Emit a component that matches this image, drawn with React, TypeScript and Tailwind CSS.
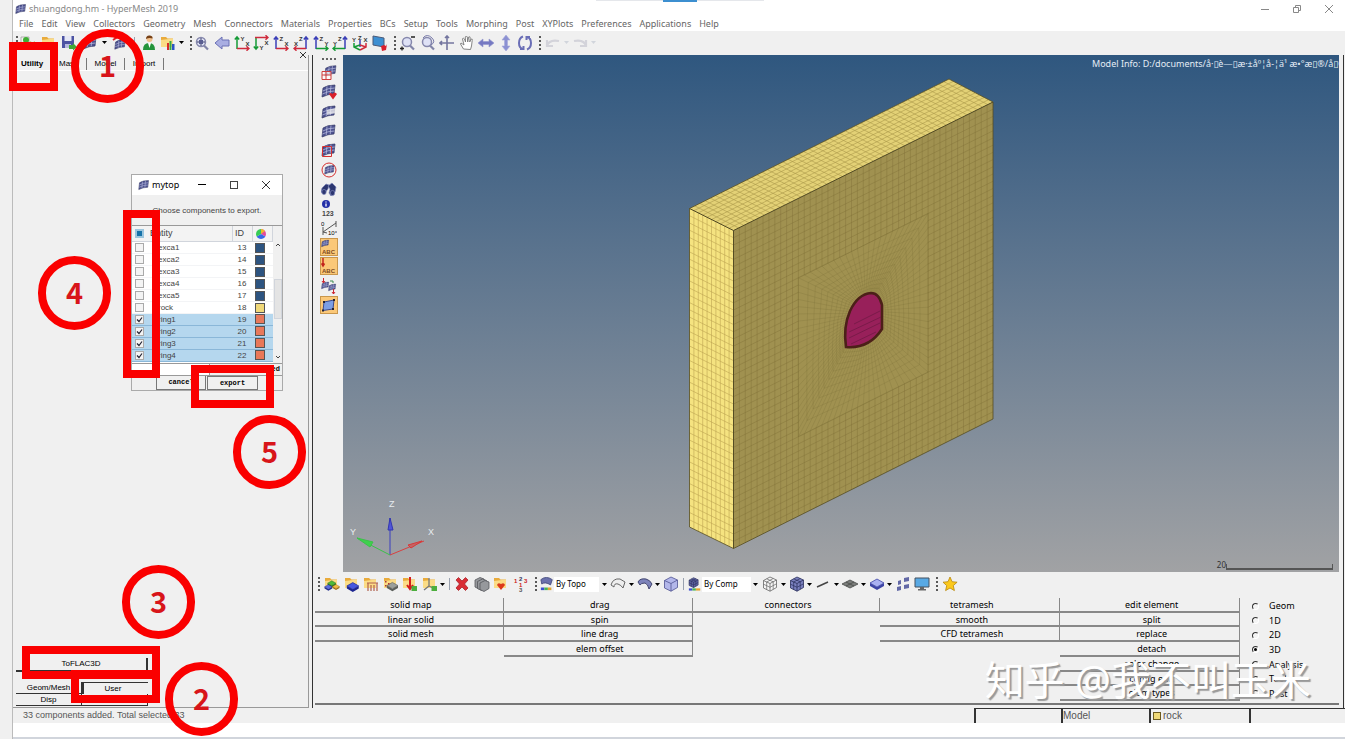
import React, { useState } from 'react';
import clsx from 'clsx';

const MENUS = ['File', 'Edit', 'View', 'Collectors', 'Geometry', 'Mesh', 'Connectors', 'Materials', 'Properties', 'BCs', 'Setup', 'Tools', 'Morphing', 'Post', 'XYPlots', 'Preferences', 'Applications', 'Help'];

const COLUMNS = [
  { width: 'flex-[189]', items: ['solid map', 'linear solid', 'solid mesh'] },
  { width: 'flex-[189]', items: ['drag', 'spin', 'line drag', 'elem offset'] },
  { width: 'flex-[188]', items: ['connectors'] },
  { width: 'flex-[180]', items: ['tetramesh', 'smooth', 'CFD tetramesh'] },
  { width: 'flex-[180]', items: ['edit element', 'split', 'replace', 'detach', 'color change', 'config edit', 'elem types'] },
];

const PAGES = ['Geom', '1D', '2D', '3D', 'Analysis', 'Tool', 'Post'];

const ENTITIES = [
  { name: 'exca1', id: 13, color: 'bg-[#2d5480]' },
  { name: 'exca2', id: 14, color: 'bg-[#2d5480]' },
  { name: 'exca3', id: 15, color: 'bg-[#2d5480]' },
  { name: 'exca4', id: 16, color: 'bg-[#2d5480]' },
  { name: 'exca5', id: 17, color: 'bg-[#2d5480]' },
  { name: 'rock', id: 18, color: 'bg-[#f0d878]' },
  { name: 'ring1', id: 19, color: 'bg-[#e8785a]' },
  { name: 'ring2', id: 20, color: 'bg-[#e8785a]' },
  { name: 'ring3', id: 21, color: 'bg-[#e8785a]' },
  { name: 'ring4', id: 22, color: 'bg-[#e8785a]' },
];

/* ---------- icons ---------- */

const Patch = ({ x = 0, y = 0, s = 1 }: { x?: number; y?: number; s?: number }) => (
  <g transform={`translate(${x} ${y}) scale(${s})`}>
    <path d="M2 5Q6 2 14 2L13 11Q7 11 1 14Z" fill="#4d5290" stroke="#343864" strokeWidth=".7" />
    <path d="M6 3.4L5.2 12.3M10 2.4L9.2 11.4M1.8 8Q7 5 13.7 5M1.4 11Q7 8 13.4 8" stroke="#b4b7dc" strokeWidth=".8" fill="none" />
  </g>
);

const Folder = () => (
  <>
    <path d="M1 2h5l1.5 1.5H13V12H1z" fill="#e9ab3c" />
    <path d="M1 5L13 3.5V12H1z" fill="#fbdc86" />
  </>
);

const Slab = ({ top, side, x = 0, y = 0, s = 1 }: { top: string; side: string; x?: number; y?: number; s?: number }) => (
  <g transform={`translate(${x} ${y}) scale(${s})`}>
    <path d="M1 7v3l7 4 7-4V7l-7 4z" fill={side} />
    <path d="M1 7l7-4 7 4-7 4z" fill={top} stroke={side} strokeWidth=".8" />
  </g>
);

const Cube = ({ fill, line, grid }: { fill: string; line: string; grid?: boolean }) => (
  <g stroke={line} strokeWidth=".8" fill="none" strokeLinejoin="round">
    <path d="M1.5 4.5L8 1l6.5 3v7.5L8 15.2 1.5 12z" fill={fill} />
    <path d="M1.5 4.5L8 7.5l6.5-3.5M8 7.5v7.7" />
    {grid && <path d="M4.7 2.8L11.2 5.8V13.3M11.2 2.5L4.7 6V13.6M1.5 8.2L8 11.3l6.5-3.5" strokeWidth=".7" />}
  </g>
);

const Lens = () => (
  <>
    <path d="M9.5 10l4.5 4.5" stroke="#8285a8" strokeWidth="2.2" />
    <circle cx="7" cy="7" r="4.5" fill="#dfe2f6" stroke="#8688ac" strokeWidth="1.5" />
  </>
);

const R = '#cf2a3c';
const G = '#159a36';
const B = '#3b3fb8';

// two-axis view icon, the corner says where the axes meet
const Axes = ({ corner, v, h, vc, hc }: { corner: 'bl' | 'tl' | 'br'; v: string; h: string; vc: string; hc: string }) => (
  <g fill="none" strokeWidth="1.5">
    {corner === 'bl' && (
      <>
        <path d="M3 14V2M.8 4.5L3 2l2.2 2.5" stroke={vc} />
        <path d="M3 13.5h12M12.5 11.3l2.5 2.2-2.5 2.2" stroke={hc} />
      </>
    )}
    {corner === 'tl' && (
      <>
        <path d="M3 2v12M.8 11.5L3 14l2.2-2.5" stroke={vc} />
        <path d="M2 2.5h13M12.5 .3L15 2.5l-2.5 2.2" stroke={hc} />
      </>
    )}
    {corner === 'br' && (
      <>
        <path d="M13 14V2M10.8 4.5L13 2l2.2 2.5" stroke={vc} />
        <path d="M13 13.5H1M3.5 11.3L1 13.5l2.5 2.2" stroke={hc} />
      </>
    )}
    <g fill="#333" fontSize="6" fontWeight="bold" fontFamily="Liberation Sans">
      <text x={corner === 'br' ? 6 : 6.5} y={corner === 'tl' ? 14.5 : 5.5}>{v}</text>
      <text x={corner === 'br' ? 1 : 11.5} y={corner === 'tl' ? 9.5 : 10.5}>{h}</text>
    </g>
  </g>
);

const Spot = () => <path d="M9 11l3-1 2 1 1-2-1 6-4 1z" fill="#d9202c" />;

const ART: Record<string, React.ReactNode> = {
  patch: <Patch />,
  newModel: <><path d="M1 2h8v11H1z" fill="#f3f3ee" stroke="#999" strokeWidth=".7" /><circle cx="6" cy="5" r="3" fill="#3fae34" /><path d="M10 7l5 5M10 12l5-5" stroke="#9ac43d" strokeWidth="2" /></>,
  open: <Folder />,
  save: <><path d="M1 1h12v12H1z" fill="#4c53a2" /><path d="M3.5 1h7v5h-7z" fill="#e6e8f5" /><path d="M4 9h6v4H4z" fill="#b6bade" /><path d="M8 10h4V8l4 4-4 3.5V14H8z" fill="#43a838" /></>,
  importModel: <><Patch x={2} y={3} s={0.8} /><path d="M1 5l6-4 2 3" stroke="#d8232c" strokeWidth="2" fill="none" /></>,
  user: <><circle cx="8.5" cy="4" r="3" fill="#f1c08c" /><path d="M5 4q0-4 4-3.5 3 .5 2.5 3Q8 2.5 5 4z" fill="#764016" /><path d="M2 15q0-7 6-7 6 0 6 7z" fill="#23943b" /><path d="M7 8l1.5 5L10 8z" fill="#fff" /></>,
  chartFolder: <><Folder /><path d="M7 8h2v7H7z" fill="#d92b2b" /><path d="M9.5 6h2v9h-2z" fill="#37a844" /><path d="M12 9h2.5v6H12z" fill="#2d53c4" /></>,
  fit: <><Lens /><path d="M7 3v8M3 7h8" stroke="#43466f" /><path d="M5 5h4v4H5z" fill="#5a5e91" /></>,
  back: <path d="M1 8l7-6v3h7v6H8v3z" fill="#a9aee2" stroke="#6b70b5" />,
  xy: <Axes corner="bl" v="Y" h="X" vc={G} hc={R} />,
  xyDown: <Axes corner="tl" v="Y" h="X" vc={G} hc={R} />,
  zx: <Axes corner="bl" v="Z" h="X" vc={B} hc={R} />,
  zxLeft: <Axes corner="br" v="Z" h="X" vc={B} hc={R} />,
  zy: <Axes corner="bl" v="Z" h="Y" vc={B} hc={G} />,
  zyLeft: <Axes corner="br" v="Z" h="Y" vc={B} hc={G} />,
  iso: <g fill="none" strokeWidth="1.5"><path d="M8 12V5" stroke={B} /><path d="M8 15L2 12V8M2 12l6-2" stroke={G} /><path d="M8 15l6-3V8M14 12l-6-2" stroke={R} /><g fontSize="6" fontWeight="bold" fontFamily="Liberation Sans" fill="#333"><text x="0" y="7">Y</text><text x="6" y="5">Z</text><text x="11.5" y="7">X</text></g></g>,
  screen: <><path d="M1 1l11 2v9L1 10z" fill="#3d8fd2" stroke="#4b5a78" /><Spot /></>,
  zoomPlus: <><Lens /><path d="M11 2h4M0 13.5h4M2 11.5v4" stroke="#222" strokeWidth="1.3" /></>,
  zoomArea: <><Lens /><path d="M3 3q4-5 9 0 4 4-1 7" stroke="#7779a8" fill="none" /></>,
  move: <path d="M8 1v14M1 8h14M6 3l2-2 2 2M3 6L1 8l2 2" stroke="#74769f" strokeWidth="1.6" fill="none" />,
  hand: <path d="M4.5 14L1.5 9q0-2 2 0L5 10 3.5 4q.5-2 2 0l1 3-.2-5q1-2 2 0l.4 5 1-5q1.5-1 1.5 1l-.5 4 1.5-3q1.5-.5 1 1.5L12.5 11l-1 3.5z" fill="#fff" stroke="#777" strokeWidth=".9" />,
  leftRight: <path d="M0 8l5-4v2.5h6V4l5 4-5 4V9.5H5V12z" fill="#7579c2" stroke="#9295ce" strokeWidth=".6" />,
  upDown: <path d="M8 0l4 5H9.5v6H12l-4 5-4-5h2.5V5H4z" fill="#8b90d2" stroke="#a5a8da" strokeWidth=".6" />,
  rotate: <path d="M6 1.5Q2 3 2 8t4 6M3 14h3.5v-3M10 14.5q4-1.5 4-6.5t-4-6M13 2H9.5v3" stroke="#6a6eb6" strokeWidth="2" fill="none" />,
  undo: <path d="M2 11q2-7 12-5M2 5v6h6" stroke="#d3d3da" strokeWidth="2.2" fill="none" />,
  redo: <path d="M14 11Q12 4 2 6M14 5v6H8" stroke="#d3d3da" strokeWidth="2.2" fill="none" />,
  maskBox: <><Patch x={3} y={-1} s={0.85} /><path d="M1 6.5h9v8H1zM1 10h9M5 6.5v8" fill="#fff" fillOpacity=".7" stroke="#cf3c3c" /></>,
  patchHeart: <><Patch y={-1} /><path d="M8 10q2-2 3.5 0 2-3 4.5 0l-4 5.5z" fill="#d9202c" /></>,
  patchPart: <><Patch /><path d="M6 6l9-2v5l-9 2z" fill="#f0f0f0" fillOpacity=".75" /></>,
  patchFrame: <><Patch /><path d="M1.5 4.5h9v10h-9z" fill="none" stroke="#d63030" /></>,
  patchRound: <><Patch x={3} y={2} s={0.72} /><circle cx="8" cy="8" r="7" fill="none" stroke="#d63030" /></>,
  find: <g fill="#2c3670" stroke="#8088bb" strokeWidth=".7"><path d="M1 7l4-4 3 1-1 4-4 5-3-2z" /><path d="M7 5l4-3 4 4-1 5-4 4-2-3 1-4z" /><ellipse cx="3" cy="11" rx="2.2" ry="2.6" /><ellipse cx="11.5" cy="12" rx="2.2" ry="2.6" /></g>,
  numbers: <><circle cx="5" cy="4" r="4" fill="#2430a8" /><path d="M5 1.5v1M5 3.5v3" stroke="#fff" strokeWidth="1.3" /><text x="1" y="15.5" fontSize="7" fontWeight="bold" fontFamily="Liberation Sans" fill="#444">123</text></>,
  measure: <><path d="M2 7v8M2 12L15 3M15 1v6M2 12l4 1" stroke="#555" fill="none" /><text x="0" y="6" fontSize="6" fontFamily="Liberation Sans">0</text><text x="7" y="15" fontSize="6" fontFamily="Liberation Sans">10°</text></>,
  patchAbc: <><Patch x={0} y={0} s={0.55} /><text x="1" y="15" fontSize="6" fontWeight="bold" fontFamily="Liberation Sans" fill="#7b4a20">ABC</text></>,
  loadAbc: <><path d="M2 0v8M.5 5.5L2 8l1.5-2.5" stroke="#c3241c" strokeWidth="1.5" fill="none" /><text x="1" y="15" fontSize="6" fontWeight="bold" fontFamily="Liberation Sans" fill="#7b4a20">ABC</text></>,
  loads: <><Patch x={0} y={3} s={0.55} /><Patch x={7} y={5} s={0.55} /><path d="M2.5 0v5M12.5 11v5M1 3l1.5 2L4 3M11 14l1.5 2 1.5-2" stroke="#cc2630" fill="none" /><path d="M9 3h3v2" stroke="#3b8a50" fill="none" /></>,
  sheet: <><path d="M3 5l10-2-1 9-10 1.5z" fill="#7c9ee4" stroke="#3b4a8f" /><path d="M2 4h2v2H2zM12 2h2v2h-2zM11 11h2v2h-2zM1 12.5h2v2H1z" fill="#223" /></>,
  comp: <><Folder /><Slab top="#4dbb38" side="#276f1e" x={3} y={3} s={0.6} /><Slab top="#5a6de0" side="#26318f" x={0} y={7} s={0.55} /><Slab top="#f2bb45" side="#a06e14" x={8} y={7} s={0.5} /></>,
  blueSlab: <><Folder /><Slab top="#4758e0" side="#1d2691" x={2} y={4} s={0.85} /></>,
  loadCol: <><Folder /><path d="M5 15V7h9v8M8 15V9M11 15V9M4 7h11" stroke="#b0604e" strokeWidth="1.2" fill="none" /></>,
  graySlab: <><Folder /><Slab top="#9b9f9b" side="#5b5f5b" x={3} y={4} s={0.8} /><path d="M2 5h1.5v1.5H2zM2 9h1.5v1.5H2zM5 7h1.5v1.5H5z" fill="#a33" /></>,
  loadDown: <><Folder /><path d="M8 1v11M5 9l3 4 3-4" stroke="#d51c1c" strokeWidth="2" fill="none" /><path d="M9.5 10H15v5H9.5z" fill="#4cae3e" /></>,
  system: <><Folder /><path d="M7 2v8M7 10l-5 4M7 10l6 3" stroke="#777" strokeWidth="1.3" fill="none" /><path d="M9.5 10H15v5H9.5z" fill="#4cae3e" /></>,
  remove: <path d="M2 4l2.5-2.5L8 5l3.5-3.5L14 4l-3.5 4 3.5 4-2.5 2.5L8 11l-3.5 3.5L2 12l3.5-4z" fill="#d92d35" stroke="#a3151d" strokeWidth=".7" />,
  layers: <g fill="#96989c" stroke="#55575c" strokeWidth=".8"><path d="M1 4l5-2.5L10 3v7l-5 3-4-2z" /><path d="M3.5 5.5l5-2.5 4 1.5v7l-5 3-4-2z" /><path d="M6 7l5-2.5L15 6v6.5l-5 3-4-2z" /></g>,
  heartFolder: <><Folder /><path d="M8 14L4 9q1-3 4-1 3-2 4 1z" fill="#dc3a1c" /></>,
  renumber: <g fontSize="6" fontWeight="bold" fontFamily="Liberation Sans"><text x="1" y="7" fill="#c22">1</text><text x="6" y="5" fill="#335">2</text><text x="11" y="7" fill="#c22">3</text><text x="6" y="11" fill="#c22">1</text><text x="6" y="16" fill="#555">3</text></g>,
  topo: <><path d="M1 3q6-5 13 0l-2 6Q6 5 2 8z" fill="#6a70ac" stroke="#464b7e" /><path d="M1 12h4v3H1z" fill="#3c4ed0" /><path d="M5 12h4v3H5z" fill="#48b552" /><path d="M9 12h4v3H9z" fill="#e5a531" /></>,
  surf: <path d="M1 9Q3 2 10 3l5 3-2 6q-2-3-5-4-4-1-4 3z" fill="#eee" stroke="#666" />,
  surfFill: <path d="M1 6q2-4 8-3 4 1 6 5l-3 5q-1-5-4-6-4 0-5 2z" fill="#7d83ba" stroke="#41456f" />,
  cube: <Cube fill="#b3b7ea" line="#4e5290" />,
  comps: <><g transform="scale(.8)"><Cube fill="#5f65a4" line="#252a52" grid /></g><path d="M1 13h4v2.5H1z" fill="#3c4ed0" /><path d="M5 13h4v2.5H5z" fill="#48b552" /><path d="M9 13h5v2.5H9z" fill="#e5a531" /></>,
  wire: <Cube fill="#f5f5f5" line="#666" grid />,
  wireFill: <Cube fill="#7a80be" line="#292e5b" grid />,
  line: <path d="M2 11l11-5" stroke="#444" strokeWidth="1.5" />,
  plate: <path d="M0 8l8-4 8 4-8 4zM4 6l8 4M12 6l-8 4" fill="#7b7d7b" stroke="#484a48" strokeWidth=".8" />,
  slab: <Slab top="#aab1f2" side="#3e45a6" />,
  shrink: <g fill="#6268a6"><path d="M3 5l3-1v4l-3 1zM9 2l5-1v4l-5 1zM2 11l4-1v4l-4 1zM9 9l5-1v4l-5 1z" /></g>,
  monitor: <><path d="M1 2h14v9H1z" fill="#58a9e4" stroke="#44505e" /><path d="M6 11h4v2H6zM4 13h8v1.5H4z" fill="#666" /></>,
  star: <path d="M8 1l2.1 4.7 5 .5-3.8 3.4 1.1 5L8 12l-4.4 2.6 1.1-5L1 6.2l5-.5z" fill="#fbc81c" stroke="#b8860b" strokeWidth=".8" />,
};

const Icon = ({ name, size = 'size-4' }: { name: string; size?: string }) => (
  <svg viewBox="0 0 16 16" className={clsx(size, 'shrink-0')} aria-hidden="true">{ART[name]}</svg>
);

const Tool = ({ name }: { name: string }) => (
  <button type="button" aria-label={name} className="size-4 shrink-0"><Icon name={name} /></button>
);

const Caret = ({ faded = false }: { faded?: boolean }) => (
  <svg viewBox="0 0 5 3" className={clsx('h-[3px] w-[5px] shrink-0', faded ? 'text-gray-300' : 'text-black')}><path d="M0 0h5L2.5 3z" fill="currentColor" /></svg>
);

const Grip = () => (
  <svg viewBox="0 0 2 16" className="h-4 w-0.5 shrink-0"><path d="M1 1v14" stroke="#333" strokeWidth="1.6" strokeDasharray="2 2" /></svg>
);

const Tools = ({ names, className }: { names: string[]; className: string }) => (
  <div className={clsx('flex shrink-0 items-center justify-between', className)}>
    {names.map((n, i) => (n === 'v' ? <Caret key={i} /> : n === 'V' ? <Caret key={i} faded /> : <Tool key={i} name={n} />))}
  </div>
);

/* ---------- model view ---------- */

type P = [number, number];

const lerp = (a: P, b: P, t: number): P => [a[0] + (b[0] - a[0]) * t, a[1] + (b[1] - a[1]) * t];
const seg = (a: P, b: P) => `M${a[0].toFixed(1)} ${a[1].toFixed(1)}L${b[0].toFixed(1)} ${b[1].toFixed(1)}`;

const A: P = [346.5, 153.5];
const TOP: P = [606, 24];
const C: P = [650, 47];
const D: P = [390.5, 175.5];
const E: P = [346.5, 472];
const F: P = [390.5, 493.5];
const H: P = [650, 364];

const quadGrid = (p: P, q: P, r: P, s: P, n: number, m: number) => {
  let d = '';
  for (let i = 1; i < n; i++) d += seg(lerp(p, q, i / n), lerp(s, r, i / n));
  for (let j = 1; j < m; j++) d += seg(lerp(p, s, j / m), lerp(q, r, j / m));
  return d;
};

const front = (u: number, v: number): P => lerp(lerp(D, C, u), lerp(F, H, u), v);

// clockwise from the lower left corner of the tunnel
const TUNNEL: P[] = [[503, 292], [502, 279], [504, 263], [510, 249], [518, 240], [526, 237], [533, 238], [538, 245], [540, 258], [538, 276], [530, 286], [518, 292]];

const tunnelAt = (t: number): P => {
  const k = t * TUNNEL.length;
  const i = Math.floor(k) % TUNNEL.length;
  return lerp(TUNNEL[i], TUNNEL[(i + 1) % TUNNEL.length], k - Math.floor(k));
};

const squareAt = (t: number): P => {
  const k = (t * 4) % 4;
  const f = (k % 1) / 2;
  if (k < 1) return front(0.25, 0.75 - f);
  if (k < 2) return front(0.25 + f, 0.25);
  if (k < 3) return front(0.75, 0.25 + f);
  return front(0.75 - f, 0.75);
};

const frontMesh = () => {
  let d = '';
  for (let i = 1; i < 44; i++) {
    const u = i / 44;
    if (u > 0.25 && u < 0.75) d += seg(front(u, 0), front(u, 0.25)) + seg(front(u, 0.75), front(u, 1));
    else d += seg(front(u, 0), front(u, 1));
  }
  for (let j = 1; j < 44; j++) {
    const v = j / 44;
    if (v > 0.25 && v < 0.75) d += seg(front(0, v), front(0.25, v)) + seg(front(0.75, v), front(1, v));
    else d += seg(front(0, v), front(1, v));
  }
  return d;
};

const radialMesh = () => {
  let d = '';
  const n = 88;
  for (let i = 0; i < n; i++) d += seg(tunnelAt(i / n), squareAt(i / n));
  for (const r of [0.06, 0.12, 0.19, 0.27, 0.36, 0.46, 0.57, 0.69, 0.82, 1]) {
    for (let i = 0; i < n; i++) {
      d += seg(lerp(tunnelAt(i / n), squareAt(i / n), r), lerp(tunnelAt((i + 1) / n), squareAt((i + 1) / n), r));
    }
  }
  return d;
};

const pts = (...p: P[]) => p.map((q) => q.join(',')).join(' ');

function ModelView() {
  return (
    <div className="relative min-h-0 flex-1 overflow-hidden bg-linear-to-b from-[#2f577f] to-[#a1a2a4]">
      <svg viewBox="0 0 996 517" className="absolute inset-0 size-full" role="img" aria-label="rock mesh">
        <polygon points={pts(A, TOP, C, D)} fill="#e3d176" />
        <polygon points={pts(A, D, F, E)} fill="#f5e380" />
        <polygon points={pts(D, C, H, F)} fill="#a09150" />
        <g fill="none" strokeWidth=".6">
          <path d={quadGrid(A, TOP, C, D, 50, 10)} stroke="#ab984a" />
          <path d={quadGrid(A, D, F, E, 10, 44)} stroke="#bda550" />
          <path d={frontMesh()} stroke="#7d7037" strokeOpacity=".65" />
          <path d={radialMesh()} stroke="#7d7037" strokeOpacity=".45" />
        </g>
        <path d={`${seg(A, D)}L${C.join(' ')}M${D.join(' ')}L${F.join(' ')}`} fill="none" stroke="#554c22" />
        <polygon points={pts(A, TOP, C, H, F, E)} fill="none" stroke="#554c22" strokeWidth=".8" />
        <path d="M503 292Q500 272 507 256Q515 239 528 238Q536 238 539 250L539 274Q526 294 503 292Z" fill="#98205a" stroke="#4c2018" strokeWidth="2.6" />
        <path d="M506 277L538 262M506 283L537 268M508 289L533 277M511 269L537 256" stroke="#6d1842" strokeWidth=".7" />
      </svg>
      <p className="absolute top-0.5 right-0 w-[247px] overflow-hidden font-['Noto_Sans','DejaVu_Sans',sans-serif] text-[9px] leading-[14px] whitespace-nowrap text-[#e4ecf5]">
        Model Info: D:/documents/å·▯è—▯æ·±åº¦å-¦ä¹ æ•°æ▯®/å▯C
      </p>
      <svg viewBox="0 0 100 80" className="absolute bottom-0 left-0 h-20 w-[100px]">
        <path d="M47 63V26" stroke="#3a3fc0" />
        <path d="M45 38l2-12 3 12z" fill="#5055d8" stroke="#3336b0" />
        <path d="M47 63L81 49" stroke="#d84040" />
        <path d="M65 53l14-4-11 7z" fill="#c46464" stroke="#d83838" />
        <path d="M47 63L14 46" stroke="#3cc04a" />
        <path d="M14 46l16 4-3 5z" fill="#3fd04e" stroke="#3cc04a" />
        <g fill="#e8ecef" fontSize="9" fontFamily="Liberation Sans"><text x="46" y="15">Z</text><text x="85" y="43">X</text><text x="7" y="43">Y</text></g>
      </svg>
      <div className="absolute right-1.5 bottom-0.5 flex items-end text-[8px] leading-[10px] text-[#333]">
        <span>20</span>
        <span className="h-1.5 w-[107px] border-x border-b-2 border-[#555]" />
      </div>
    </div>
  );
}

/* ---------- export window ---------- */

function ExportWindow() {
  const [picked, setPicked] = useState<number[]>([19, 20, 21, 22]);

  const toggle = (id: number) => {
    setPicked(picked.includes(id) ? picked.filter((p) => p !== id) : [...picked, id]);
  };

  return (
    <section className="absolute top-[174px] left-[131px] flex h-[217px] w-[152px] flex-col border border-[#aaa] bg-[#f0f0f0] font-['Liberation_Sans',Arial,sans-serif] text-[9px] leading-[11px] text-[#444]">
      <header className="flex h-5 items-center bg-white pl-1.5">
        <Icon name="patch" size="size-3" />
        <h2 className="ml-0.5 flex-1 font-['Noto_Sans',sans-serif] text-[9px] text-black">mytop</h2>
        <button type="button" aria-label="Minimize" className="h-px w-2 bg-black" />
        <button type="button" aria-label="Maximize" className="mx-6 size-2 border border-[#444]" />
        <button type="button" aria-label="Close" className="mr-3">
          <svg viewBox="0 0 8 8" className="size-2"><path d="M0 0l8 8M8 0L0 8" stroke="#333" /></svg>
        </button>
      </header>
      <p className="pt-2.5 pb-[9px] text-center text-[8px]">Choose components to export.</p>
      <div className="flex h-[139px] overflow-hidden border-t border-[#999] bg-white">
        <table className="h-[136px] flex-1 border-collapse">
          <thead>
            <tr className="h-4 border-b border-gray-300 bg-[#f3f3f3] text-left">
              <th className="w-4 p-0 pl-[3px]"><span className="block size-[9px] border-2 border-[#9cc6de] bg-[#1672a8]" /></th>
              <th className="border-r border-gray-300 p-0 pl-0.5 font-normal">Entity</th>
              <th className="w-5 border-r border-gray-300 p-0 pl-0.5 font-normal">ID</th>
              <th className="w-5 border-r border-gray-300 p-0 pl-[3px]">
                <svg viewBox="0 0 10 10" className="size-2.5">
                  <path d="M5 5V0a5 5 0 0 1 4.3 7.5z" fill="#e44a9a" />
                  <path d="M5 5l4.3 2.5A5 5 0 0 1 .7 7.5z" fill="#3767e8" />
                  <path d="M5 5L.7 7.5A5 5 0 0 1 5 0z" fill="#38cc55" />
                  <path d="M5 5V0a5 5 0 0 1 4 2z" fill="#f0b52c" />
                </svg>
              </th>
            </tr>
          </thead>
          <tbody>
            {ENTITIES.map((e) => {
              const on = picked.includes(e.id);
              return (
                <tr key={e.id} className={on ? 'border-b border-[#8ab7d8] bg-[#b5d7ee]' : 'border-b border-gray-100'}>
                  <td className="p-0 pl-[3px]">
                    <label className="relative block size-[9px]">
                      <input type="checkbox" aria-label={e.name} checked={on} onChange={() => toggle(e.id)} className="block size-[9px] appearance-none border border-[#aaa] bg-[#f4f4f4]" />
                      {on && <svg viewBox="0 0 9 9" className="pointer-events-none absolute inset-0"><path d="M2 4.5l2 2 3-4" stroke="#223" strokeWidth="1.2" fill="none" /></svg>}
                    </label>
                  </td>
                  <td className="p-0 pl-2.5 text-[8px] leading-[9px]">{e.name}</td>
                  <td className="p-0 pr-1.5 text-right text-[8px] leading-[9px]">{e.id}</td>
                  <td className="p-0 pl-0.5"><span className={clsx('block size-[10px] border border-[#555]', e.color)} /></td>
                </tr>
              );
            })}
          </tbody>
        </table>
        <div className="flex w-[9px] flex-col items-center bg-[#f0f0f0] pt-4">
          <svg viewBox="0 0 6 4" className="mt-px h-1 w-1.5"><path d="M1 3l2-2 2 2" stroke="#444" fill="none" /></svg>
          <div className="mt-8 h-10 w-2 border border-gray-300 bg-[#e4e4e4]" />
          <svg viewBox="0 0 6 4" className="mt-auto mb-1 h-1 w-1.5"><path d="M1 1l2 2 2-2" stroke="#444" fill="none" /></svg>
        </div>
      </div>
      <div className="flex flex-1 border-y border-[#999] font-['Liberation_Mono',monospace] text-[7px] font-bold text-black">
        <span className="w-[78px] border-r border-[#999] bg-white" />
        <span className="flex-1 pr-0.5 text-right">ed</span>
      </div>
      <div className="flex h-[14px] justify-center gap-px font-['Liberation_Mono',monospace] text-[7px] font-bold text-black">
        <button type="button" className="w-[50px] border-x border-b border-[#777]">cancel</button>
        <button type="button" className="w-[51px] border border-[#777]">export</button>
      </div>
    </section>
  );
}

/* ---------- marks ---------- */

const BOXES = [
  'top-[42px] left-[9px] h-[49px] w-[49px]',
  'top-[210px] left-[123px] h-[168px] w-[37px]',
  'top-[365px] left-[191px] h-[43px] w-[83px]',
  'top-[646px] left-[22px] h-[33px] w-[138px]',
  'top-[670px] left-[71px] h-[33px] w-[89px]',
];

const STEPS = [
  { n: 1, at: 'top-[29px] left-[71px]' },
  { n: 2, at: 'top-[662px] left-[165px]' },
  { n: 3, at: 'top-[565px] left-[122px]' },
  { n: 4, at: 'top-[256px] left-[38px]' },
  { n: 5, at: 'top-[415px] left-[233px]' },
];

function Marks() {
  return (
    <div className="pointer-events-none">
      {BOXES.map((b) => <span key={b} className={clsx('absolute border-8 border-[#fa0000]', b)} />)}
      {STEPS.map((s) => (
        <span key={s.n} className={clsx("absolute flex h-[74px] w-[73px] items-center justify-center rounded-full border-8 border-[#fa0000] pb-1 font-['Noto_Sans_CJK_SC',sans-serif] text-[29px] leading-[40px] font-bold text-[#d8151a]", s.at)}>
          {s.n}
        </span>
      ))}
    </div>
  );
}

/* ---------- panels ---------- */

function UtilityPanel() {
  return (
    <aside className="flex w-[296px] shrink-0 flex-col border-r border-b border-[#999] pb-px font-['Liberation_Sans',Arial,sans-serif] text-[8px] leading-[10px] text-black">
      <div className="flex h-4 items-end border-b border-white">
        <nav className="flex flex-1 text-left leading-[12px]">
          <button type="button" className="w-[42px] pl-2 text-left font-bold">Utility</button>
          <button type="button" className="w-8 border-r border-[#777] pl-1 text-left">Mask</button>
          <button type="button" className="w-[38px] border-r border-[#777]">Model</button>
          <button type="button" className="w-[39px] border-r border-[#777]">Import</button>
        </nav>
        <button type="button" aria-label="Close panel" className="mr-0.5 mb-3">
          <svg viewBox="0 0 6 6" className="size-1.5"><path d="M0 0l6 6M6 0L0 6" stroke="#333" /></svg>
        </button>
      </div>
      <div className="flex-1" />
      <div className="ml-[3px] w-[132px]">
        <button type="button" className="mb-2.5 block h-[14px] w-full border-r-2 border-b-2 border-[#333]">ToFLAC3D</button>
        <div className="grid grid-cols-2">
          <button type="button" className="h-3 border-r border-b border-[#333]">Geom/Mesh</button>
          <button type="button" className="h-3 border-t border-l-2 border-[#333] pr-1.5">User</button>
          <button type="button" className="h-3 border-r border-b border-[#333]">Disp</button>
          <span className="border-r border-b border-[#333]" />
        </div>
      </div>
    </aside>
  );
}

function PagePanel() {
  const [page, setPage] = useState('3D');

  return (
    <div className="flex h-[103px] text-[9px] leading-[12px] text-black">
      {COLUMNS.map((c) => (
        <div key={c.items[0]} className={clsx('grid grid-rows-7', c.width)}>
          {c.items.map((t) => (
            <button key={t} type="button" className="border-r border-b-2 border-[#888] pt-px pl-1">{t}</button>
          ))}
        </div>
      ))}
      <div className="grid flex-[87] grid-rows-7 pt-px pl-3">
        {PAGES.map((p) => (
          <label key={p} className="flex items-center gap-2.5">
            <input
              type="radio"
              name="page"
              checked={page === p}
              onChange={() => setPage(p)}
              className="size-[7px] shrink-0 appearance-none rounded-full border border-white border-t-[#333] border-l-[#333] bg-[#f4f4f4] checked:bg-black checked:bg-clip-content checked:p-px"
            />
            {p}
          </label>
        ))}
      </div>
    </div>
  );
}

function DisplayBar() {
  return (
    <div className="flex h-6 shrink-0 items-center pl-[3px] text-[8px] text-black">
      <Grip />
      <Tools className="ml-1 w-[114px]" names={['comp', 'blueSlab', 'loadCol', 'graySlab', 'loadDown', 'system']} />
      <span className="ml-0.5"><Caret /></span>
      <span className="mx-1 h-3 w-px bg-gray-400" />
      <Tools className="w-[75px]" names={['remove', 'layers', 'heartFolder', 'renumber']} />
      <span className="w-1.5" />
      <Grip />
      <span className="ml-[3px]"><Icon name="topo" size="size-3.5" /></span>
      <select aria-label="Topology colour" className="h-[15px] w-[45px] appearance-none bg-white pl-0.5"><option>By Topo</option></select>
      <span className="mx-[3px]"><Caret /></span>
      <Tools className="w-[69px]" names={['surf', 'v', 'surfFill', 'v', 'cube']} />
      <span className="mx-1 h-3 w-px bg-gray-400" />
      <Icon name="comps" size="size-3.5" />
      <select aria-label="Component colour" className="h-[15px] w-[49px] appearance-none bg-white pl-0.5"><option>By Comp</option></select>
      <span className="ml-0.5"><Caret /></span>
      <Tools className="ml-1 w-[168px]" names={['wire', 'v', 'wireFill', 'v', 'line', 'v', 'plate', 'v', 'slab', 'v', 'shrink', 'monitor']} />
      <span className="w-1.5" />
      <Grip />
      <span className="ml-1 flex"><Tool name="star" /></span>
    </div>
  );
}

const SIDE = ['maskBox', 'patchHeart', 'patchPart', 'patch', 'patchFrame', 'patchRound', 'find', 'numbers', 'measure', 'patchAbc', 'loadAbc', 'loads', 'sheet'];
const ACTIVE = ['patchAbc', 'loadAbc', 'sheet'];

function App() {
  return (
    <div className="relative flex min-h-screen overflow-hidden bg-[#f0f0f0] font-['Noto_Sans','Noto_Sans_CJK_SC',sans-serif] text-[#666]">
      <div className="w-[13px] shrink-0 border-r border-[#bbb]" />
      <div className="flex min-w-0 flex-1 flex-col">
        <header className="relative flex h-4 items-center bg-white pt-0.5 pl-0.5 text-[#888]">
          <span className="absolute top-0 left-[583px] flex h-px w-[168px] justify-center bg-gray-200"><span className="h-0.5 w-[34px] bg-[#3c8fd0]" /></span>
          <Icon name="patch" size="size-3" />
          <h1 className="ml-0.5 flex-1 text-[9px] leading-[12px]">shuangdong.hm - HyperMesh 2019</h1>
          <div className="flex items-center gap-6 pr-3">
            <button type="button" aria-label="Minimize" className="h-px w-2 bg-[#888]" />
            <button type="button" aria-label="Restore"><svg viewBox="0 0 8 8" className="size-2"><path d="M.5 2.5h5v5h-5zM2.5 2.5v-2h5v5h-2" fill="none" stroke="#888" /></svg></button>
            <button type="button" aria-label="Close"><svg viewBox="0 0 8 8" className="size-2"><path d="M0 0l8 8M8 0L0 8" stroke="#888" /></svg></button>
          </div>
        </header>
        <nav className="flex h-[15px] items-center gap-2 bg-white pl-1.5 text-[9px] leading-[12px]">
          {MENUS.map((m) => <button key={m} type="button">{m}</button>)}
        </nav>
        <div className="flex h-6 items-center pb-px pl-[3px]">
          <Grip />
          <Tools className="ml-0.5 w-[108px]" names={['newModel', 'open', 'save', 'patch', 'v', 'importModel']} />
          <span className="mx-1.5 h-3 w-px bg-gray-400" />
          <Tools className="w-[43px]" names={['user', 'chartFolder', 'v']} />
          <span className="w-1.5" />
          <Grip />
          <Tools className="ml-0.5 w-[194px]" names={['fit', 'back', 'xy', 'xyDown', 'zx', 'zxLeft', 'zy', 'zyLeft', 'iso', 'screen']} />
          <span className="w-1.5" />
          <Grip />
          <Tools className="ml-1 w-[133px]" names={['zoomPlus', 'zoomArea', 'move', 'hand', 'leftRight', 'upDown', 'rotate']} />
          <span className="w-1.5" />
          <Grip />
          <Tools className="ml-1 w-[51px]" names={['undo', 'V', 'redo', 'V']} />
        </div>

        <main className="flex min-h-0 flex-1">
          <UtilityPanel />
          <section className="ml-[3px] flex min-w-0 flex-1 flex-col border-l border-[#333]">
            <div className="mr-px flex min-h-0 flex-1 flex-col border-r border-[#333] pl-0.5">
              <div className="flex min-h-0 flex-1 flex-col pr-1">
                <div className="flex min-h-0 flex-1">
                  <div className="flex w-7 shrink-0 flex-col items-center pt-[3px]">
                    <svg viewBox="0 0 16 2" className="h-0.5 w-4"><path d="M1 1h14" stroke="#333" strokeWidth="1.6" strokeDasharray="2 2" /></svg>
                    <div className="mt-1 flex h-[250px] flex-col justify-between">
                      {SIDE.map((n) => (
                        <button key={n} type="button" aria-label={n} className={clsx('flex size-[18px] items-center justify-center', ACTIVE.includes(n) && 'border border-[#c9974d] bg-[#fbc878]')}>
                          <Icon name={n} />
                        </button>
                      ))}
                    </div>
                  </div>
                  <ModelView />
                </div>
                <DisplayBar />
                <div className="border-b-2 border-[#777] pt-0.5 pb-0.5"><PagePanel /></div>
              </div>
              <div className="h-[3px]" />
            </div>
          </section>
        </main>

        <footer className="flex h-[15px] items-stretch font-['Liberation_Sans',Arial,sans-serif] text-[9px] leading-[14px] text-[#555]">
          <p className="flex-1 pl-2.5">33 components added. Total selected 33</p>
          <span className="w-[87px] border-t border-l-2 border-[#333]" />
          <span className="w-[88px] border-t border-l-2 border-[#333] text-[10px]">Model</span>
          <span className="flex w-[100px] items-center gap-0.5 border-t border-l-2 border-[#333] pl-0.5 text-[10px]">
            <span className="size-2 border border-[#6b5a20] bg-[#efd978]" />rock
          </span>
          <span className="w-24 border-t border-l-2 border-[#333]" />
        </footer>
        <div className="h-4 border-b-2 border-gray-300 bg-white" />
      </div>

      <ExportWindow />
      <p className="pointer-events-none absolute right-[34px] bottom-[29px] text-[40px] leading-[60px] whitespace-nowrap text-white [text-shadow:2px_2px_1px_#999]">知乎 @我不叫玉米</p>
      <Marks />
    </div>
  );
}

export default App;
